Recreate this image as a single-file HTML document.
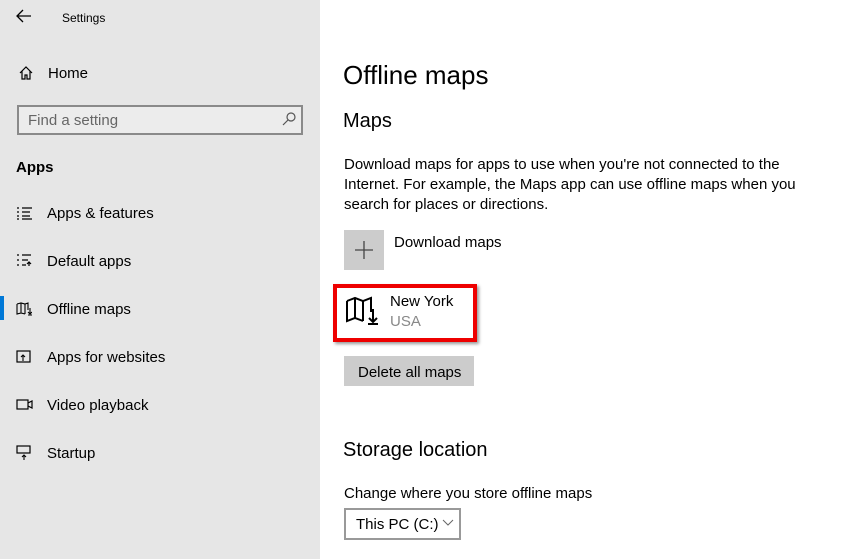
<!DOCTYPE html>
<html><head><style>
body{margin:0;width:847px;height:559px;overflow:hidden;font-family:"Liberation Sans",sans-serif;color:#000;position:relative;background:#fff}
.side{position:absolute;left:0;top:0;width:320px;height:559px;background:#e6e6e6}
.a{position:absolute;white-space:nowrap}
.it{position:absolute;left:47px;font-size:15px}
.ic{position:absolute;left:16px}
</style></head><body>
<div class="side">
<svg class="a" style="left:16px;top:9px" width="16" height="14"><path d="M15 7H2M7 1L1 7l6 6" stroke="#000" stroke-width="1.3" fill="none"/></svg>
<div class="a" style="left:62px;top:11px;font-size:12px">Settings</div>
<svg class="a" style="left:18px;top:65px" width="16" height="16"><path d="M2 8L8 2l6 6M4 6v8h3v-4h2v4h3V6" stroke="#000" stroke-width="1.2" fill="none"/></svg>
<div class="a" style="left:48px;top:65px;font-size:15px">Home</div>
<div class="a" style="left:17px;top:105px;width:282px;height:26px;border:2px solid #8a8a8a;background:#ececec"></div>
<div class="a" style="left:28px;top:112px;font-size:15px;color:#666">Find a setting</div>
<svg class="a" style="left:282px;top:112px" width="14" height="14"><circle cx="9" cy="5" r="4" stroke="#555" fill="none" stroke-width="1.2"/><path d="M6 8L1 13" stroke="#555" stroke-width="1.2"/></svg>
<div class="a" style="left:16px;top:159px;font-size:15px;font-weight:bold">Apps</div>
<svg class="ic a" style="top:206px" width="16" height="14"><path d="M1 2h2M1 6h2M1 10h2M1 13h2M6 2h10M6 6h8M6 10h8M6 13h10" stroke="#000" stroke-width="1.3"/></svg>
<div class="it" style="top:205px">Apps &amp; features</div>
<svg class="ic a" style="top:253px" width="16" height="14"><path d="M1 2h2M1 7h2M1 12h2M6 2h9M6 7h6M6 12h4M13 13V9M11 11l2-2 2 2" stroke="#000" stroke-width="1.2" fill="none"/></svg>
<div class="it" style="top:253px">Default apps</div>
<div class="a" style="left:0;top:296px;width:4px;height:24px;background:#0078d7"></div>
<svg class="ic a" style="top:302px" width="16" height="14"><path d="M1 2l4-1 4 1 3-1v7M1 2v10l4-1 4 1M5 1v10M9 2v10M14 6v6M12 10l2 2 2-2M12 13h4" stroke="#000" stroke-width="1.1" fill="none"/></svg>
<div class="it" style="top:301px">Offline maps</div>
<svg class="ic a" style="top:350px" width="16" height="14"><rect x="1" y="1" width="13" height="11" stroke="#000" fill="none" stroke-width="1.2"/><path d="M7 11V5M5 7l2-2 2 2" stroke="#000" stroke-width="1.1" fill="none"/></svg>
<div class="it" style="top:349px">Apps for websites</div>
<svg class="ic a" style="top:399px" width="17" height="12"><rect x="1" y="1" width="11" height="9" stroke="#000" fill="none" stroke-width="1.2"/><path d="M12 4l4-2v7l-4-2" stroke="#000" fill="none" stroke-width="1.2"/></svg>
<div class="it" style="top:397px">Video playback</div>
<svg class="ic a" style="top:445px" width="16" height="16"><rect x="1" y="1" width="13" height="7" stroke="#000" fill="none" stroke-width="1.2"/><path d="M8 15V10M6 12l2-2 2 2" stroke="#000" fill="none" stroke-width="1.1"/></svg>
<div class="it" style="top:445px">Startup</div>
</div>
<div class="a" style="left:343px;top:60px;font-size:26px">Offline maps</div>
<div class="a" style="left:343px;top:110px;font-size:20px">Maps</div>
<div class="a" style="left:344px;top:155px;font-size:15px;line-height:20px">Download maps for apps to use when you're not connected to the<br>Internet. For example, the Maps app can use offline maps when you<br>search for places or directions.</div>
<div class="a" style="left:344px;top:230px;width:40px;height:40px;background:#ccc"></div>
<svg class="a" style="left:354px;top:240px" width="20" height="20"><path d="M10 1v18M1 10h18" stroke="#444" stroke-width="1.3"/></svg>
<div class="a" style="left:394px;top:234px;font-size:15px">Download maps</div>
<div class="a" style="left:333px;top:284px;width:136px;height:50px;border:4px solid #e00;box-shadow:2px 2px 3px rgba(0,0,0,.4)"></div>
<svg class="a" style="left:345px;top:296px" width="34" height="30"><path d="M2 5l8-3 8 3 8-3v14M2 5v20l8-3 8 3M10 2v20M18 5v20" stroke="#000" stroke-width="2" fill="none"/><path d="M28 13v13M24 22l4 4 4-4M23 28h10" stroke="#000" stroke-width="2" fill="none"/></svg>
<div class="a" style="left:390px;top:293px;font-size:15px">New York</div>
<div class="a" style="left:390px;top:313px;font-size:15px;color:#888">USA</div>
<div class="a" style="left:344px;top:356px;width:130px;height:30px;background:#ccc"></div>
<div class="a" style="left:358px;top:364px;font-size:15px">Delete all maps</div>
<div class="a" style="left:343px;top:439px;font-size:20px">Storage location</div>
<div class="a" style="left:344px;top:485px;font-size:15px">Change where you store offline maps</div>
<div class="a" style="left:344px;top:508px;width:113px;height:28px;border:2px solid #999"></div>
<div class="a" style="left:356px;top:516px;font-size:15px">This PC (C:)</div>
<svg class="a" style="left:442px;top:519px" width="12" height="8"><path d="M1 1l5 5 5-5" stroke="#666" fill="none"/></svg>
</body></html>
